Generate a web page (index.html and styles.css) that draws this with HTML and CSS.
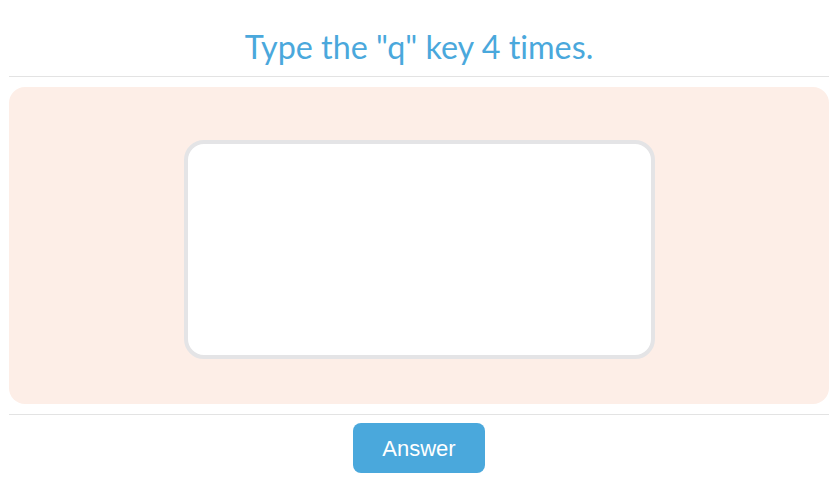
FILE: index.html
```html
<!DOCTYPE html>
<html>
<head>
<meta charset="utf-8">
<link rel="stylesheet" href="styles.css">
</head>
<body>
<div class="page">
  <h1 class="title">Type the "q" key 4 times.</h1>
  <div class="panel">
    <div class="inputbox"></div>
  </div>
  <div class="footer">
    <button class="answer">Answer</button>
  </div>
</div>
</body>
</html>
```
FILE: styles.css
```css
html, body {
  margin: 0;
  padding: 0;
  background: #ffffff;
}
.page {
  padding: 0 11px 0 9px;
  display: flex;
  flex-direction: column;
}
.title {
  margin: 0;
  border-bottom: 1px solid #e3e3e3;
  display: flex;
  align-items: center;
  justify-content: center;
  padding-top: 16px;
  box-sizing: content-box;
  height: 60px;
  font-family: Lato, sans-serif;
  font-weight: 400;
  font-size: 32.3px;
  font-variant-ligatures: none;
  font-feature-settings: "liga" 0, "clig" 0;
  color: #4aa8dc;
}
.panel {
  margin-top: 10px;
  height: 317px;
  background: #fdeee7;
  border-radius: 16px;
  display: flex;
  justify-content: center;
  align-items: center;
}
.inputbox {
  width: 463px;
  height: 211px;
  background: #ffffff;
  border: 4px solid #e4e4e6;
  border-radius: 20px;
  margin-top: 8px;
}
.footer {
  margin-top: 10px;
  border-top: 1px solid #e3e3e3;
  display: flex;
  justify-content: center;
  padding-top: 8px;
}
.answer {
  width: 132px;
  height: 50px;
  padding-top: 3px;
  background: #4aa8dc;
  color: #ffffff;
  border: none;
  border-radius: 8px;
  font-family: "Liberation Sans", Arial, sans-serif;
  font-size: 22px;
}
```
